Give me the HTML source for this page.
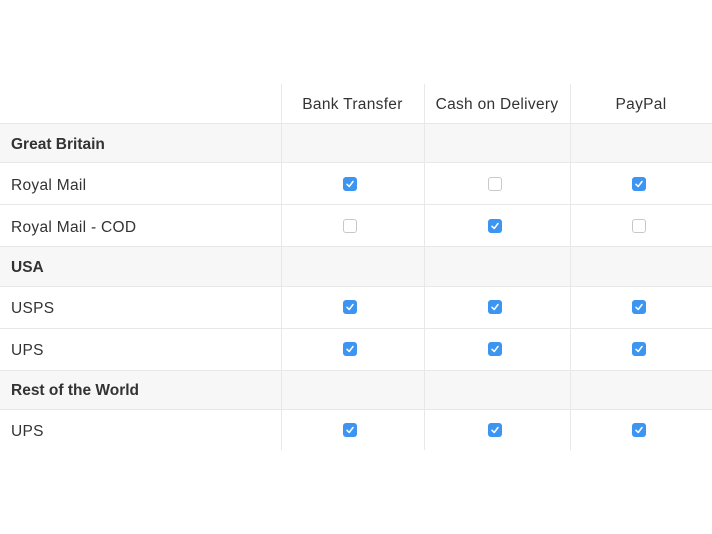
<!DOCTYPE html><html><head><style>
body{margin:0;width:712px;height:534px;background:#fff;position:relative;font-family:"Liberation Sans",sans-serif;color:#333;overflow:hidden}
.r{position:absolute;left:0;width:712px;border-bottom:1px solid #e8e8e8;box-sizing:border-box}
.g{background:#f7f7f7}
.v{position:absolute;top:84px;height:366px;width:1px;background:#e8e8e8}
.t{position:absolute;font-size:15.5px;line-height:18px;letter-spacing:0.3px}
.b{font-weight:bold;letter-spacing:0}
.h{position:absolute;top:96px;font-size:15.5px;letter-spacing:0.3px;text-align:center}
.c{position:absolute;width:14px;height:14px;border-radius:3px;box-sizing:border-box}
.on{background:#3d95f2}
.off{border:1px solid #c8c8c8;background:#fff}
.on svg{position:absolute;left:2px;top:2px}
</style></head><body>
<div class="r" style="top:84px;height:40px"></div>
<div class="r g" style="top:124px;height:39px"></div>
<div class="r" style="top:163px;height:42px"></div>
<div class="r" style="top:205px;height:42px"></div>
<div class="r g" style="top:247px;height:40px"></div>
<div class="r" style="top:287px;height:42px"></div>
<div class="r" style="top:329px;height:42px"></div>
<div class="r g" style="top:371px;height:39px"></div>
<div class="v" style="left:281px"></div>
<div class="v" style="left:424px"></div>
<div class="v" style="left:570px"></div>
<div class="h" style="left:281px;width:143px">Bank Transfer</div>
<div class="h" style="left:424px;width:146px">Cash on Delivery</div>
<div class="h" style="left:570px;width:142px">PayPal</div>
<div class="t b" style="left:11px;top:136px">Great Britain</div>
<div class="t" style="left:11px;top:177px">Royal Mail</div>
<div class="t" style="left:11px;top:219px">Royal Mail - COD</div>
<div class="t b" style="left:11px;top:259px">USA</div>
<div class="t" style="left:11px;top:300px">USPS</div>
<div class="t" style="left:11px;top:342px">UPS</div>
<div class="t b" style="left:11px;top:382px">Rest of the World</div>
<div class="t" style="left:11px;top:423px">UPS</div>
<script>
var rows=[[177,1,0,1],[219,0,1,0],[300,1,1,1],[342,1,1,1],[423,1,1,1]],xs=[343,488,632],h='';
rows.forEach(function(r){for(var i=0;i<3;i++){h+='<div class="c '+(r[i+1]?'on':'off')+'" style="left:'+xs[i]+'px;top:'+r[0]+'px">'+(r[i+1]?'<svg width="10" height="10" viewBox="0 0 10 10"><path d="M2 5.3L4.2 7.5L8 2.5" stroke="#fff" stroke-width="1.5" fill="none" stroke-linecap="round" stroke-linejoin="round"/></svg>':'')+'</div>';}});
document.body.insertAdjacentHTML('beforeend',h);
</script>
</body></html>
